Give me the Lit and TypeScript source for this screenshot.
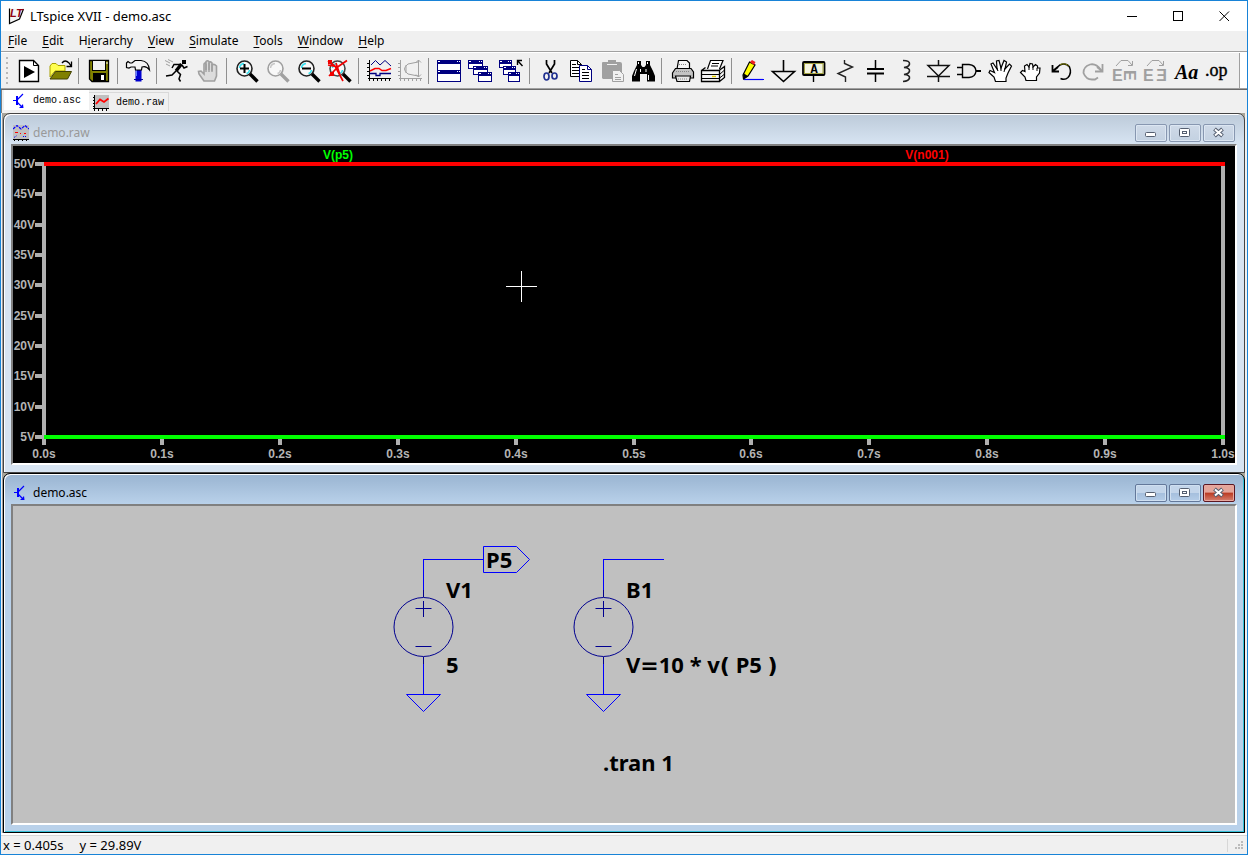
import { LitElement, html, svg, css, TemplateResult, SVGTemplateResult } from "lit";
import { customElement, property } from "lit/decorators.js";
import { classMap } from "lit/directives/class-map.js";

type Tool = { name: string; art: SVGTemplateResult; disabled?: boolean } | "sep";

const G = "#a0a0a0";

const lens = (ring: string, handle: string, shine: string) => svg`
  <circle cx="9.5" cy="9.5" r="7.5" fill="#f8f8f8" stroke=${ring} stroke-width="1.6" />
  <path d="M4.5 9 Q5 5 9 4.5 M14.5 11 Q14 14 11.5 14.5" fill="none" stroke=${shine} stroke-width="1.5" />
  <path d="M15 15 L22.5 22.5" stroke=${handle} stroke-width="3.4" />`;

const miniWindow = (x: number, y: number, w: number, h: number) => svg`
  <rect x=${x + 0.5} y=${y + 0.5} width=${w - 1} height=${h - 1} fill="#fff" stroke="#000080" />
  <rect x=${x} y=${y} width=${w} height="4" fill="#000080" />
  <path d="M${x + 1} ${y + 1.5} h2 M${x + w - 4} ${y + 1.5} h1 M${x + w - 2} ${y + 1.5} h1" stroke="#fff" />`;

const axes = (c: string) => svg`
  <path d="M2.5 1 V22 M1 19.5 H24 M0 4.5 H2 M0 8.5 H2 M0 12.5 H2 M0 16.5 H2 M6.5 20 V22 M10.5 20 V22 M14.5 20 V22 M18.5 20 V22 M22.5 20 V22" fill="none" stroke=${c} shape-rendering="crispEdges" />`;

const turnArrow = svg`<path d="M4 7 L9 1.5 H16 L20 6 M20.5 2 V6.5 H16" fill="none" stroke=${G} />`;

const tools: Tool[] = [
  { name: "Run", art: svg`
    <path d="M2.5 1.5 H16.5 L21.5 6.5 V22.5 H2.5 Z" fill="#fff" stroke="#000" stroke-width="1.4" />
    <path d="M16.5 1.5 V6.5 H21.5" fill="none" stroke="#000" />
    <path d="M7 7 L18 13 L7 19 Z" />` },
  { name: "Open", art: svg`
    <path d="M2 18 V7 L4 4.5 H8 L10 6.5 H17 V12 H7 Z" fill="#ffff50" stroke="#a8a000" />
    <path d="M2 20 L7.5 12.5 H23.5 L19.5 20 Z" fill="#808000" stroke="#404000" />
    <path d="M14 4 Q17 0 21 4 L23 7 M23.5 2.5 V7.5 H18.5" fill="none" stroke="#000" stroke-width="1.3" />` },
  "sep",
  { name: "Save", art: svg`
    <path d="M2.5 1.5 H21.5 V22.5 H5 L2.5 20 Z" fill="#808000" stroke="#000" stroke-width="1.3" />
    <rect x="5.5" y="1.5" width="13" height="10" fill="#f0f0f0" stroke="#000" />
    <rect x="6" y="14" width="13" height="8" />
    <rect x="14" y="16" width="3" height="5" fill="#fff" />
    <rect x="19.5" y="3" width="1" height="2" fill="#fff" />` },
  "sep",
  { name: "Control Panel", art: svg`
    <path d="M9.5 9 H15.5 V22.5 H9.5 Z" fill="#0000d0" />
    <path d="M10.5 10 V17" stroke="#6080ff" />
    <path d="M0.5 4 L2 2.5 L4 4 H6 L9 1.5 H15 C20 2 23 5 23.5 11 C21 7.5 19 7 16 8 L15.5 11 H9.5 L9 8 H5 L3 9 L0.5 8.5 Z" fill="#f4f4f4" stroke="#000" stroke-width="1.2" />
    <path d="M8 20.5 H17" stroke="#0000a0" />` },
  "sep",
  { name: "Run simulation", art: svg`
    <rect x="17" y="1" width="4" height="4" />
    <path d="M16.5 5 L11 12" stroke="#000" stroke-width="3.4" />
    <path d="M17 6 L19 9 L22.5 7.5 M15 5.5 L9 5.5 L7 9 M11 12 L7 16 L1 17 M12 12 L15.5 15.5 L14 20 L15.5 22.5" fill="none" stroke="#000" stroke-width="1.5" />
    <path d="M0 1.5 L5 4 M3 0.5 L8 3 M1 5 L5 7" fill="none" stroke=${G} />` },
  { name: "Halt", disabled: true, art: svg`
    <path d="M8 22 L3 15 L2.5 12.5 L5 12 L8 15 V5 Q9 3 10 5 V11 V2.5 Q11.5 1 13 2.5 V11 V3.5 Q14.5 2 16 4 V12 V6 Q18 4.5 20.5 7 V17 L18.5 22 Z" fill="#dcdcdc" stroke=${G} stroke-width="1.6" />
    <path d="M10 5 V13 M13 4 V13 M16 5 V13" stroke=${G} stroke-width="1.4" />` },
  "sep",
  { name: "Zoom in", art: svg`${lens("#222", "#000", "#30e0f0")}<path d="M5 9.5 H14 M9.5 5 V14" stroke="#000" stroke-width="2" />` },
  { name: "Pan", disabled: true, art: lens(G, G, "#c8c8c8") },
  { name: "Zoom out", art: svg`${lens("#222", "#000", "#30e0f0")}<path d="M5 9.5 H14" stroke="#000" stroke-width="2" />` },
  { name: "Zoom full extents", art: svg`${lens("#444", "#000", "#30e0f0")}
    <path d="M0 2 L7 7 L15 22 M19 1.5 L11 7 L1 17 M0 6 L10 8 M8 4 L12 16" fill="none" stroke="#f00000" stroke-width="1.7" />
    <path d="M0 1 H4 V5 H0 Z M2 13 H6 V17 H2 Z" fill="#f00000" />` },
  "sep",
  { name: "Autorange", art: svg`${axes("#000")}
    <path d="M4 6 L8.5 1.5 L13 6 L18 1.5 L24 7" fill="none" stroke="#000080" />
    <path d="M3 12 L8 9.5 H12 L15 11.5 H19 L24 9.5" fill="none" stroke="#f00" stroke-width="1.5" />
    <path d="M3 14.5 H9 V16.5 H13 V14.5 H24" fill="none" stroke="#000080" stroke-width="1.3" />` },
  { name: "Setup", disabled: true, art: svg`${axes(G)}
    <path d="M20.5 1 V18 M18 3.5 L20.5 1 L23 3.5 M18 15.5 L20.5 18 L23 15.5 M20 3 L10 5 Q3 10 10 15 L20 17 M8 6 V14" fill="none" stroke=${G} /></path>` },
  "sep",
  { name: "Tile windows", art: svg`${miniWindow(0, 1, 24, 11)}${miniWindow(0, 11, 24, 12)}` },
  { name: "Cascade windows", art: svg`${miniWindow(0, 1, 15, 9)}${miniWindow(5, 7, 15, 9)}${miniWindow(10, 13, 14, 10)}` },
  { name: "Close windows", art: svg`${miniWindow(0, 1, 13, 8)}${miniWindow(4, 7, 13, 9)}${miniWindow(9, 13, 12, 10)}
    <path d="M18.5 6 V1.5 H23 M18.5 1.5 L23.5 7" fill="none" stroke="#000" stroke-width="1.4" />` },
  "sep",
  { name: "Cut", art: svg`
    <path d="M8.5 1 V5 L14 14 M16.5 1 V5 L11 14" fill="none" stroke="#000" stroke-width="1.7" />
    <ellipse cx="8.5" cy="17.5" rx="2.5" ry="3.5" fill="none" stroke="#203090" stroke-width="1.7" />
    <ellipse cx="16.5" cy="17" rx="2.5" ry="3" fill="none" stroke="#203090" stroke-width="1.7" />` },
  { name: "Copy", art: svg`
    <path d="M1.5 1.5 H8.5 L12.5 5.5 V17.500 H1.5 Z" fill="#fff" stroke="#000" />
    <path d="M8.5 1.5 V5.5 H12.5 M3 5.5 H7 M3 8.5 H10 M3 11.5 H10 M3 14.5 H10" fill="none" stroke="#000" />
    <path d="M10.5 6.5 H18.5 L22.5 10.5 V22.5 H10.5 Z" fill="#fff" stroke="#000080" />
    <path d="M18.5 6.500 V10.5 H22.5" fill="none" stroke="#000080" />
    <path d="M13 10.5 H16 M13 13.5 H20 M13 16.5 H20 M13 19.5 H20" fill="none" stroke="#000" />` },
  { name: "Paste", disabled: true, art: svg`
    <path d="M2 4 Q2 3 3 3 H8 V1 H16 V3 H20 Q22 3 22 5 V20 H3 L2 19 Z" fill=${G} />
    <path d="M7 5.5 H17" stroke="#f0f0f0" />
    <path d="M12.5 11.5 H19.5 L23.5 15.5 V22.5 H12.5 Z" fill="#f0f0f0" stroke=${G} />
    <path d="M15 15.5 H18 M15 18.5 H21 M15 20.5 H21" stroke=${G} />` },
  { name: "Find", art: svg`
    <path d="M6 2 H10 V6 L11.5 8 H13.5 L15 6 V2 H19 V6 L22 12 L24 17 V22.5 H16 V15 H9 V22.5 H1 V17 L3 12 L6 6 Z" />
    <path d="M7.5 3 V5 M16.5 3 V5 M5.5 10 L3.5 17 M9.5 10 V13 M15 10 V13 M17.5 16 V21" stroke="#fff" />` },
  "sep",
  { name: "Print", art: svg`
    <path d="M7 10 L8.5 1.5 H17 L19.5 4 V10" fill="#f4f4f4" stroke="#000" stroke-width="1.2" />
    <path d="M2.5 14 L5.5 9.5 H21 L23.5 13 V19 H2.5 Z" fill="#c4c4c4" stroke="#000" stroke-width="1.2" />
    <path d="M5.5 17 H20.5 L19.5 22.5 H7 Z" fill="#e8e8e8" stroke="#000" stroke-width="1.2" />
    <path d="M9 5.5 H17 M6 12.5 H20 M8 20 H18" stroke="#888" stroke-dasharray="1 1" />` },
  { name: "Print setup", art: svg`
    <path d="M6.5 10 L9.5 1.5 H22 L18.5 10" fill="#fff" stroke="#000" stroke-width="1.2" />
    <path d="M11 4.5 H18 M10 7 H17" stroke="#000" />
    <path d="M0.5 11.5 L4.5 8.5 M18 11.5 L23.5 7.5 V18.5 L18.5 22.5 M0.5 11.5 H18.5 V22.5 H0.5 Z" fill="#f4f4f4" stroke="#000" stroke-width="1.3" />
    <path d="M1 15.5 H18 M1 19.5 H18 L23 15.5 M18.5 15.5 L23 11.5" fill="none" stroke="#000" />
    <path d="M11 17.5 H15" stroke="#e8d000" stroke-width="1.5" />` },
  "sep",
  { name: "Wire", art: svg`
    <path d="M3 16 L9.5 3 L15 6 L8 17 L3.5 20 Z" fill="#ffff00" stroke="#000" stroke-width="1.2" />
    <path d="M3 14 L8 17 L3.5 20.5 Z" />
    <path d="M10 3 L12 1 L15.5 3 L14 6 Z" fill="#f02020" />
    <path d="M4 20.5 H24" stroke="#0000ff" stroke-width="1.2" />` },
  { name: "Ground", art: svg`<path d="M12.5 1 V12 M1.5 12.5 H23.5 L12.5 22.5 Z" fill="none" stroke="#000" stroke-width="1.6" />` },
  { name: "Label net", art: svg`
    <rect x="1" y="3" width="21.5" height="13" rx="1" fill="#f4f4e0" stroke="#000" stroke-width="1.8" />
    <rect x="2.5" y="4.5" width="18.5" height="10" fill="none" stroke="#a0a040" />
    <text x="12" y="14" text-anchor="middle" font-family="Liberation Mono" font-weight="700" font-size="12">A</text>
    <path d="M11.5 17 V23" stroke="#000" stroke-width="1.4" />` },
  { name: "Resistor", art: svg`<path d="M11.5 1 V4.5 L19.5 8 L5 14.5 L12.5 18 V23" fill="none" stroke="#222" stroke-width="1.4" />` },
  { name: "Capacitor", art: svg`<path d="M11.5 1 V9 M11.5 15 V23" stroke="#000" stroke-width="1.5" /><path d="M3 10 H20 M3 14.5 H20" stroke="#000" stroke-width="2" />` },
  { name: "Inductor", art: svg`<path d="M8 1.5 Q15 1.5 14.5 5 Q14 8 9 8.5 Q15 9 14.5 12 Q14 15 9 15.5 Q15 16 14.5 19 Q14 22 8 22.5" fill="none" stroke="#222" stroke-width="1.6" />` },
  { name: "Diode", art: svg`<path d="M12.5 1 V6 M12.5 17 V23 M1 17.5 H24 M2 6.5 H23 L12.5 17 Z" fill="none" stroke="#111" stroke-width="1.5" />` },
  { name: "Component", art: svg`<path d="M5.5 5.5 H12 Q18.5 6 19 12 Q18.5 18 12 18.5 H5.5 Z M0 8.5 H5 M0 15.5 H5" fill="#ececec" stroke="#000" stroke-width="1.4" /><path d="M19 12 H24" stroke="#000" stroke-width="2" />` },
  { name: "Move", art: svg`
    <path d="M7.5 22.5 L6 18 L1 13.5 L2 11.5 L6.5 13.5 L3 5 L5 4 L9 10 L8.5 2 L11 1.5 L13 9 L16 1.5 L18.5 3 L17 10 L21.5 5 L23.5 7 L20 14 L18 19 V22.5 Z" fill="#fff" stroke="#000" stroke-width="1.2" />
    <path d="M9 9 L10 12 M13 8 V12 M17 9 L16 13" stroke="#000" />` },
  { name: "Drag", art: svg`
    <path d="M7 21.5 L6 18 L1.5 13.5 L3.5 11.5 L6 12.5 L5.5 7 L8 5.5 L10 8 L11 4.5 L13.5 5 L14 8 L16.5 5.5 L18.5 7 V9 L21 9 L20.5 14 L17.5 18 V21.5 Z" fill="#fff" stroke="#000" stroke-width="1.2" />
    <path d="M10 8 V11 M14 8 V11 M18 9 V12" stroke="#000" />` },
  { name: "Undo", art: svg`<path d="M3 12 L10 6 Q16 3.5 19.5 8 Q22 14 18 18.5 Q15 21.5 10.5 19.5" fill="none" stroke="#000" stroke-width="1.5" /><path d="M10 5.5 Q16 3.5 19 7.5" fill="none" stroke="#808000" /><path d="M2.5 6 V12.5 H9 M3 12 L8 8" fill="none" stroke="#000" stroke-width="1.8" />` },
  { name: "Redo", disabled: true, art: svg`<path d="M20 11 Q15 4 9 5.5 Q2 8 2.5 14 Q5 20.5 11 20.5 H14 L17 18.5" fill="none" stroke=${G} stroke-width="1.8" /><path d="M21.5 5 V12.5 H14 M21 12 L16 8" fill="none" stroke=${G} stroke-width="1.8" />` },
  { name: "Rotate", disabled: true, art: svg`${turnArrow}
    <text x="0" y="22" font-family="Liberation Sans" font-weight="700" font-size="16" fill=${G}>E</text>
    <text transform="translate(12 11) rotate(90)" font-family="Liberation Sans" font-weight="700" font-size="16" fill=${G}>E</text>` },
  { name: "Mirror", disabled: true, art: svg`${turnArrow}
    <text x="0" y="22" font-family="Liberation Sans" font-weight="700" font-size="16" fill=${G}>E</text>
    <text x="24" y="22" text-anchor="end" font-family="Liberation Sans" font-weight="700" font-size="16" fill=${G}>Ǝ</text>` },
  { name: "Text", art: svg`<text x="1" y="20" font-family="Liberation Serif" font-weight="700" font-style="italic" font-size="20">Aa</text>` },
  { name: "SPICE directive", art: svg`<text x="0" y="17" font-family="Liberation Serif" font-size="18" stroke="#000" stroke-width="0.4">.op</text>` },
];

const menus: [string, string, string][] = [
  ["", "F", "ile"], ["", "E", "dit"], ["H", "i", "erarchy"], ["", "V", "iew"],
  ["", "S", "imulate"], ["", "T", "ools"], ["", "W", "indow"], ["", "H", "elp"],
];

const transistorIcon = html`<svg class="glyph" width="16" height="16" viewBox="0 0 16 16" aria-hidden="true">
  <path d="M1 7.5 H5 M5 7 L11 1 M5 9 L9 13" fill="none" stroke="#00f" stroke-width="1.2" />
  <path d="M5 3 V12" stroke="#00f" stroke-width="2" /><path d="M11.5 15 H7 L11 11 Z" fill="#00f" />
</svg>`;

const waveTabIcon = html`<svg class="glyph" width="16" height="16" viewBox="0 0 16 16" aria-hidden="true">
  <rect x="2" y="0" width="14" height="13" fill="#c0c0c0" />
  <path d="M1.5 0 V16 M0 13.5 H16 M0 2.5 H2 M0 5.5 H2 M0 8.5 H2 M0 11.5 H2 M5.5 13 V16 M9.5 13 V16 M13.5 13 V16" stroke="#000" shape-rendering="crispEdges" />
  <path d="M3 9 L7 4.5 L11 7 L15.5 3.5" fill="none" stroke="#f00" stroke-width="1.8" />
</svg>`;

const waveIcon = html`<svg class="glyph" width="16" height="16" viewBox="0 0 16 16" aria-hidden="true">
  <rect width="16" height="14" fill="#c0c0c0" />
  <path d="M0 4 L4 0.5 L8 4 L12 0.5 L16 4" fill="none" stroke="#00f" stroke-width="1.2" stroke-dasharray="3 1" />
  <path d="M2 7.5 H5 M7 8.5 H8 M11 8.5 H13" stroke="#f00" />
  <path d="M1 12.5 L4 10.5 M10 11.5 H14" stroke="#00f" stroke-dasharray="1 1" />
  <path d="M0 14.5 H16 M1.5 14 V16 M5.5 14 V16 M9.5 14 V16 M13.5 14 V16" stroke="#000" shape-rendering="crispEdges" />
</svg>`;

@customElement("mdi-window")
class MdiWindow extends LitElement {
  @property() heading = "";
  @property({ type: Boolean }) active = false;
  @property({ attribute: false }) icon: TemplateResult = html``;

  static styles = css`
    :host { display: flex; flex: 1 1 0; min-height: 0; }
    .frame {
      flex: 1; min-width: 0; display: flex; flex-direction: column; box-sizing: border-box;
      border: 1px solid #444; border-radius: 7px 7px 0 0; padding: 0 7px 7px;
      background: linear-gradient(#bccad9, #d7e4f2 30px); box-shadow: inset 1px 1px #fff;
    }
    .frame.active { border-color: #000; background: linear-gradient(#99b4d1, #b9d1ea 30px); box-shadow: inset 1px 1px #fff, inset -1px -1px #35c0d8; }
    .bar { display: flex; align-items: center; gap: 4px; height: 23px; padding: 7px 2px 0; font: 12px/16px "Noto Sans", sans-serif; color: #999; }
    .active .bar { color: #000; }
    .glyph { display: block; }
    .name { flex: 1; }
    .buttons { display: flex; gap: 2px; }
    button {
      width: 32px; height: 18px; padding: 0; display: grid; place-items: center;
      border: 1px solid #8797b0; border-radius: 2px; background: linear-gradient(#cfdae8, #c3d1e1); box-shadow: inset 0 0 0 1px #dce6f2;
    }
    .active button { border-color: #63789a; background: linear-gradient(#c3d5ea 50%, #a5bfdd 50%, #b5cde8); box-shadow: inset 0 0 0 1px #cfdff0; }
    .active button.close { border-color: #5b1722; background: linear-gradient(#e4a59a 45%, #bb3a22 50%, #d68070); box-shadow: inset 0 0 0 1px #e8a8a0; }
    .buttons svg { display: block; }
    .client { flex: 1; min-height: 0; display: grid; border: 2px solid; border-color: #808080 #fff #fff #808080; }
  `;

  render() {
    return html`<section class=${classMap({ frame: true, active: this.active })} aria-label=${this.heading}>
      <div class="bar">
        ${this.icon}<span class="name">${this.heading}</span>
        <div class="buttons">
          <button aria-label="Minimize"><svg width="12" height="12" viewBox="0 0 12 12"><rect x="0.5" y="5.5" width="10" height="4" rx="1" fill="#fff" stroke="#555f70" /></svg></button>
          <button aria-label="Restore"><svg width="12" height="12" viewBox="0 0 12 12"><rect x="0.5" y="1.5" width="10" height="8" rx="1" fill="#fff" stroke="#555f70" /><rect x="3.5" y="4.5" width="4" height="2" fill="none" stroke="#555f70" /></svg></button>
          <button class="close" aria-label="Close"><svg width="12" height="12" viewBox="0 0 12 12"><path d="M1.5 2 L9.5 9 M9.5 2 L1.5 9" stroke="#555f70" stroke-width="4" /><path d="M2 2.5 L9 8.5 M9 2.5 L2 8.5" stroke="#fff" stroke-width="2" /></svg></button>
        </div>
      </div>
      <div class="client"><slot></slot></div>
    </section>`;
  }
}

@customElement("wave-plot")
class WavePlot extends LitElement {
  static styles = css`
    :host { display: grid; min-height: 0; background: #000; }
    svg { display: block; width: 100%; height: 100%; min-height: 0; }
    text { font: 700 12px "Liberation Sans", Arial, sans-serif; fill: #b4b4b4; }
    .end { text-anchor: end; }
    .mid { text-anchor: middle; }
    .axis { fill: #b0b0b0; }
    text.green, .green { fill: #0f0; }
    text.red, .red { fill: #f00; }
    .cross { stroke: #fff; }
  `;

  render() {
    const volts = [50, 45, 40, 35, 30, 25, 20, 15, 10, 5];
    const times = Array.from({ length: 11 }, (_, i) => i);
    return html`<svg viewBox="0 0 1222 317" role="img" aria-label="Waveforms of V(p5) and V(n001)">
      <g shape-rendering="crispEdges">
        <rect class="axis" x="29" y="16" width="4" height="283" />
        <rect class="axis" x="1208" y="16" width="4" height="283" />
        ${volts.map((_, i) => svg`<rect class="axis" x="22" y=${Math.round(16 + (i * 273) / 9)} width="8" height="4" />`)}
        ${times.map((i) => svg`<rect class="axis" x=${Math.round(29 + i * 117.9)} y="292" width="4" height="7" />`)}
        <rect class="red" x="31" y="16" width="1181" height="4" />
        <rect class="green" x="31" y="289" width="1181" height="4" />
        <path class="cross" d="M493 140.5 H524 M508.5 125 V156" />
      </g>
      ${volts.map((v, i) => svg`<text class="end" x="22" y=${Math.round(22 + (i * 273) / 9)}>${v}V</text>`)}
      ${times.map((i) => svg`<text class="mid" x=${Math.round(31 + i * 117.9)} y="312">${(i / 10).toFixed(1)}s</text>`)}
      <text class="mid green" x="325" y="13">V(p5)</text>
      <text class="mid red" x="914" y="13">V(n001)</text>
    </svg>`;
  }
}

@customElement("schematic-sheet")
class SchematicSheet extends LitElement {
  static styles = css`
    :host { display: grid; min-height: 0; background: #c0c0c0; }
    svg { display: block; width: 100%; height: 100%; min-height: 0; }
    text { font: 700 22px "Noto Sans", "Open Sans", sans-serif; }
    .sym { font-family: "DejaVu Sans", sans-serif; }
    .wire { fill: none; stroke: #00f; }
    .part { fill: none; stroke: #000090; }
  `;

  private source(x: number) {
    return svg`
      <path class="wire" d="M${x} 84 V53.5 M${x} 158 V188 M${x - 17} 188.5 H${x + 17} L${x} 205.5 Z" />
      <circle class="part" cx=${x} cy="121" r="29.5" />
      <path class="part" d="M${x} 84 V91 M${x} 151 V158 M${x - 8} 102.5 H${x + 8} M${x} 95 V111 M${x - 8} 140.5 H${x + 8}" />`;
  }

  render() {
    return html`<svg viewBox="0 0 1222 317" role="img" aria-label="Schematic">
      ${this.source(410.5)}
      <path class="wire" d="M410 53.5 H470.5 M470.5 40.5 H503.5 L516.5 53.5 L503.5 66.5 H470.5 Z" />
      ${this.source(590.5)}
      <path class="wire" d="M590 53.5 H651" />
      <text x="473" y="62">P5</text>
      <text x="433" y="92">V1</text>
      <text x="433" y="167">5</text>
      <text x="613" y="92">B1</text>
      <text x="613" y="167">V<tspan class="sym">=</tspan>10 * v<tspan class="sym">(</tspan> P5 <tspan class="sym">)</tspan></text>
      <text x="590" y="265">.tran 1</text>
    </svg>`;
  }
}

@customElement("app-root")
class AppRoot extends LitElement {
  static styles = css`
    :host { display: block; font: 12px/16px "Noto Sans", sans-serif; color: #000; }
    .app { display: flex; flex-direction: column; height: 100vh; box-sizing: border-box; border: 1px solid #1883d7; background: #f0f0f0; }
    button { font: inherit; color: inherit; border: 0; background: none; padding: 0; }
    svg { display: block; overflow: visible; }
    .title { display: flex; align-items: center; height: 30px; flex: none; background: #fff; padding-left: 7px; gap: 5px; font-size: 13px; }
    .title .name { flex: 1; }
    .title button { width: 46px; height: 30px; display: grid; place-items: center; }
    .controls { display: flex; }
    .menu { display: flex; flex: none; gap: 15px; height: 20px; align-items: center; padding-left: 7px; border-bottom: 1px solid #a0a0a0; }
    .menu u { text-underline-offset: 2px; }
    .toolrow { display: flex; flex: none; height: 35px; background: #fff; border-top: 1px solid #fff; border-bottom: 1px solid #a0a0a0; box-shadow: 0 1px #696969; }
    .tools { display: flex; flex: 1; min-width: 0; margin-right: 7px; background: #f0f0f0; border-right: 1px solid #a0a0a0; align-items: center; }
    .handle { flex: none; width: 2px; height: 28px; margin: 0 6px 0 5px; background: repeating-linear-gradient(#b8b8b8 0 2px, #f0f0f0 2px 5px); }
    .tools button { flex: none; width: 31px; height: 34px; padding: 0 4px 0 3px; }
    .sep { flex: none; width: 1px; height: 26px; margin: 0 5px 0 2px; background: #909090; }
    .tabs { display: flex; flex: none; height: 23px; margin-top: 1px; padding: 0 2px; border-left: 1px solid #808080; box-sizing: border-box; }
    .tabs button { display: flex; align-items: center; height: 19px; padding: 1px 4px 0; gap: 7px; margin-top: 2px; font: 10px/16px "Liberation Mono", monospace; border-top: 1px solid #d9d9d9; border-right: 1px solid #d9d9d9; }
    .tabs button.on { background: #fff; height: 20px; margin-top: 0; padding: 1px 7px 0 8px; border-color: #fff; gap: 5px; }
    .mdi { display: flex; flex: 1; min-height: 0; flex-direction: column; border-left: 1px solid #a0a0a0; margin: 0 2px 0 1px; background: #a8a59a; }
    .status { display: flex; flex: none; height: 18px; padding-left: 2px; gap: 16px; align-items: center; border-top: 1px solid #d7d7d7; box-shadow: 0 -2px #fff; margin-top: 2px; font: 13px/18px "Noto Sans", sans-serif; }
    .grip { margin-left: auto; border-left: 1px solid #d7d7d7; padding: 1px 1px 0 6px; }
  `;

  render() {
    return html`<div class="app">
      <header class="title">
        <svg width="17" height="18" viewBox="0 0 17 18" aria-hidden="true">
          <path d="M1.5 1.5 V16.5 L11.5 12 L15.5 2" fill="#f4f4f4" stroke="#000" stroke-width="1.2" />
          <text x="2" y="10" font-family="Liberation Sans" font-weight="700" font-style="italic" font-size="11" fill="#900010">LT</text>
        </svg>
        <span class="name">LTspice XVII - demo.asc</span>
        <div class="controls">
          <button aria-label="Minimize"><svg width="11" height="11"><path d="M0 5.5 H10" stroke="#000" /></svg></button>
          <button aria-label="Maximize"><svg width="11" height="11"><rect x="0.5" y="0.5" width="9" height="9" fill="none" stroke="#000" /></svg></button>
          <button aria-label="Close"><svg width="11" height="11"><path d="M0.5 0.5 L10 10 M10 0.5 L0.5 10" stroke="#000" /></svg></button>
        </div>
      </header>
      <nav class="menu">${menus.map(([a, u, b]) => html`<button>${a}<u>${u}</u>${b}</button>`)}</nav>
      <div class="toolrow">
        <div class="tools" role="toolbar">
          <span class="handle"></span>
          ${tools.map((t) => t === "sep"
            ? html`<span class="sep"></span>`
            : html`<button aria-label=${t.name} ?disabled=${t.disabled}><svg width="24" height="24" viewBox="0 0 24 24">${t.art}</svg></button>`)}
        </div>
      </div>
      <div class="tabs" role="tablist">
        <button role="tab" class="on" aria-selected="true">${transistorIcon}<span>demo.asc</span></button>
        <button role="tab" aria-selected="false">${waveTabIcon}<span>demo.raw</span></button>
      </div>
      <main class="mdi">
        <mdi-window heading="demo.raw" .icon=${waveIcon}><wave-plot></wave-plot></mdi-window>
        <mdi-window heading="demo.asc" active .icon=${transistorIcon}><schematic-sheet></schematic-sheet></mdi-window>
      </main>
      <footer class="status">
        <span>x = 0.405s</span><span>y = 29.89V</span>
        <svg class="grip" width="12" height="12" viewBox="0 0 12 12" aria-hidden="true"><path d="M7 2 H9 M4 5 H6 M7 5 H9 M1 8 H3 M4 8 H6 M7 8 H9" stroke="#bbb" stroke-width="2" /></svg>
      </footer>
    </div>`;
  }
}
